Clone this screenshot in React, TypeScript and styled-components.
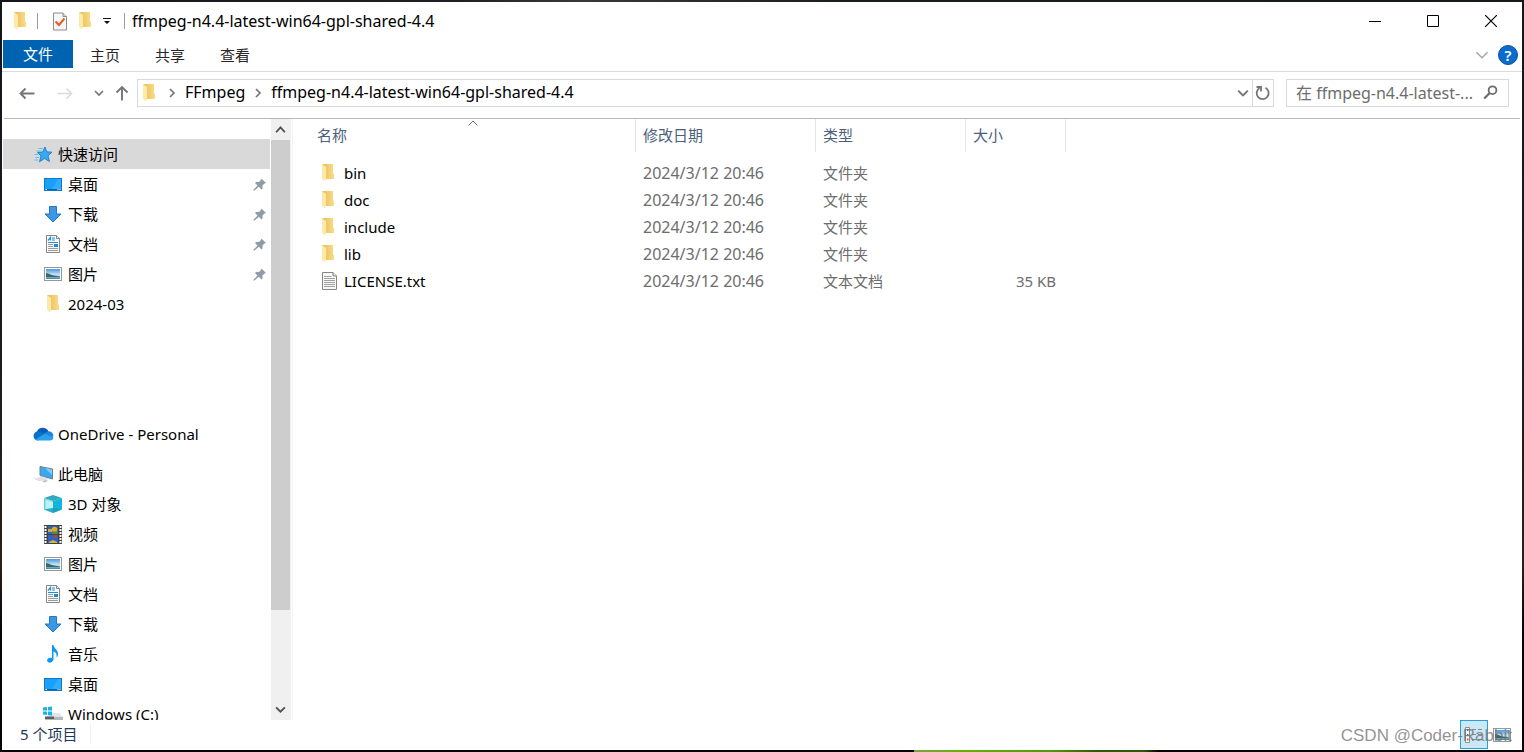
import React from "react";
import styled, { createGlobalStyle } from "styled-components";

const GlobalStyle = createGlobalStyle`
  *, *::before, *::after { box-sizing: border-box; }
  body {
    margin: 0;
    font-family: "Noto Sans", "Noto Sans CJK SC", sans-serif;
    font-size: 15px;
    line-height: 20px;
    color: #000;
  }
  button, input {
    font: inherit;
    color: inherit;
    border: 0;
    background: none;
    padding: 0;
    margin: 0;
  }
  a { color: inherit; text-decoration: none; }
  svg { display: block; flex: none; }
  ul { list-style: none; margin: 0; padding: 0; }
`;

/* ---------- window frame ---------- */

const Desktop = styled.div`
  height: 100vh;
  padding: 2px;
  background:
    linear-gradient(90deg, transparent 60%, #7ea04a 60%, #63b300 63%, #4f9a08 69%, #2c5a06 72%, #305c0a 75%, transparent 76%) bottom / 100% 2px no-repeat,
    linear-gradient(90deg, #17151a, #211f26 30%, #3a363f 38%, #1b1d24 55%, #15191f) top / 100% 2px no-repeat,
    linear-gradient(180deg, #14161c, #1a1c20 45%, #2b1f19 75%, #050506 84%, #050506);
`;

const Window = styled.main`
  height: 100%;
  display: flex;
  flex-direction: column;
  background: #fff;
`;

const TitleBar = styled.header`
  height: 38px;
  flex: none;
  display: flex;
  align-items: center;
`;

const QuickTools = styled.div`
  display: flex;
  align-items: center;
  padding-left: 12px;
`;

const ToolButton = styled.button<{ $gap?: number }>`
  display: flex;
  align-items: center;
  justify-content: center;
  margin-left: ${(p) => p.$gap ?? 0}px;
`;

const Divider = styled.span<{ $left: number }>`
  width: 1px;
  height: 16px;
  margin-left: ${(p) => p.$left}px;
  background: #9a9a9a;
`;

const Title = styled.h1`
  margin: 0;
  padding-left: 7px;
  flex: 1;
  font-size: 16px;
  font-weight: 400;
`;

const CaptionButton = styled.button`
  width: 58px;
  height: 38px;
  display: flex;
  align-items: center;
  justify-content: center;
`;

const CaptionButtons = styled.div`
  display: flex;
  padding-right: 2px;
`;

/* ---------- ribbon tabs ---------- */

const Ribbon = styled.nav`
  height: 32px;
  flex: none;
  display: flex;
  align-items: flex-start;
  padding: 0 4px 0 1px;
  border-bottom: 1px solid #dadbdc;
`;

const FileTab = styled.button`
  width: 70px;
  height: 28px;
  background: #0063b1;
  color: #fff;
`;

const Tab = styled.button`
  width: 65px;
  height: 30px;
  padding-right: 1px;
  color: #262626;
`;

const RibbonEnd = styled.div`
  margin-left: auto;
  height: 30px;
  display: flex;
  align-items: center;
  gap: 9px;
`;

const HelpButton = styled.button`
  width: 20px;
  height: 20px;
  border-radius: 50%;
  border: 1px solid #0b4f94;
  background: #0a6cce;
  color: #fff;
  font-size: 15px;
  font-weight: 600;
  line-height: 18px;
`;

/* ---------- address row ---------- */

const AddressRow = styled.div`
  height: 47px;
  flex: none;
  display: flex;
  align-items: center;
  margin: 0 2px;
  padding: 0 11px 5px 14px;
  border-bottom: 1px solid #b9b9b9;
  font-size: 16px;
`;

const NavButtons = styled.div`
  display: flex;
  gap: 4px;
  padding-right: 1px;
`;

const NavButton = styled.button<{ $width: number }>`
  width: ${(p) => p.$width}px;
  height: 28px;
  display: flex;
  align-items: center;
  justify-content: center;
`;

const AddressBox = styled.div`
  flex: 1;
  height: 28px;
  display: flex;
  align-items: center;
  border: 1px solid #d9d9d9;
  padding-left: 5px;
`;

const Crumb = styled.button`
  height: 26px;
  padding-bottom: 2px;
`;

const CrumbArrow = styled.span<{ $gap?: number }>`
  width: 26px;
  margin-left: ${(p) => p.$gap ?? 0}px;
  display: flex;
  justify-content: center;
`;

const HistoryButton = styled.button`
  width: 19px;
  height: 26px;
  margin-left: auto;
  display: flex;
  align-items: center;
  justify-content: center;
`;

const RefreshButton = styled.button`
  width: 21px;
  height: 26px;
  border-left: 1px solid #d9d9d9;
  display: flex;
  align-items: center;
  justify-content: center;
`;

const SearchBox = styled.label`
  width: 223px;
  height: 28px;
  margin-left: 12px;
  padding: 0 10px 0 9px;
  border: 1px solid #d9d9d9;
  display: flex;
  align-items: center;
`;

const SearchInput = styled.input`
  flex: 1;
  min-width: 0;
  height: 26px;
  outline: none;
  &::placeholder { color: #6d6d6d; opacity: 1; }
`;

/* ---------- body ---------- */

const Body = styled.div`
  flex: 1;
  min-height: 0;
  display: flex;
`;

const Sidebar = styled.nav`
  width: 291px;
  flex: none;
  display: flex;
  border-right: 1px solid #f4f4f4;
`;

const Tree = styled.div`
  flex: 1;
  overflow: hidden;
  padding: 20px 1px 0 1px;
`;

const Group = styled.ul<{ $after: number }>`
  margin-bottom: ${(p) => p.$after}px;
`;

const TreeLink = styled.a<{ $level: number; $selected?: boolean }>`
  height: 30px;
  display: flex;
  align-items: center;
  padding: 0 3px 0 ${(p) => (p.$level === 0 ? 29 : 39)}px;
  background: ${(p) => (p.$selected ? "#d9d9d9" : "transparent")};
`;

const TreeIcon = styled.span`
  width: 22px;
  margin-right: 4px;
  display: flex;
  justify-content: center;
`;

const TreeLabel = styled.span`
  flex: 1;
  white-space: nowrap;
`;

const ScrollBar = styled.div`
  width: 20px;
  margin-right: 1px;
  display: flex;
  flex-direction: column;
  background: #f0f0f0;
`;

const ScrollButton = styled.button`
  height: 21px;
  margin-right: 1px;
  flex: none;
  display: flex;
  align-items: center;
  justify-content: center;
`;

const ScrollTrack = styled.div`
  flex: 1;
`;

const ScrollThumb = styled.div`
  height: 84%;
  margin-right: 1px;
  background: #cdcdcd;
`;

/* ---------- file list ---------- */

const FileArea = styled.section`
  flex: 1;
  min-width: 0;
`;

const FileTable = styled.table`
  width: 100%;
  table-layout: fixed;
  border-collapse: collapse;
`;

const HeadCell = styled.th<{ $first?: boolean }>`
  height: 40px;
  padding: 0;
  vertical-align: top;
  text-align: left;
  font-weight: 400;
  color: #4c607a;
  position: relative;

  > span {
    display: flex;
    align-items: center;
    height: 33px;
    padding: 0 0 2px ${(p) => (p.$first ? 24 : 7)}px;
    border-right: 1px solid #e5e5e5;
  }
`;

const SortMark = styled.svg`
  position: absolute;
  top: 1px;
  left: 175px;
`;

const Cell = styled.td<{ $right?: boolean; $date?: boolean }>`
  height: 27px;
  padding: 0 10px 0 7px;
  color: #6d6d6d;
  font-size: ${(p) => (p.$date ? 16 : 15)}px;
  white-space: nowrap;
  text-align: ${(p) => (p.$right ? "right" : "left")};
`;

const NameCell = styled(Cell)`
  padding-left: 29px;
  color: #000;
`;

const FileLink = styled.a`
  display: flex;
  align-items: center;
`;

const FileIcon = styled.span`
  width: 22px;
  height: 20px;
  display: flex;
  align-items: center;
`;

/* ---------- status bar ---------- */

const StatusBar = styled.footer`
  height: 30px;
  flex: none;
  display: flex;
  align-items: flex-start;
  position: relative;
  padding: 0 11px 0 18px;
  color: #1e395b;
`;

const Count = styled.span`
  width: 71px;
  line-height: 20px;
  margin-top: 4px;
  border-right: 1px solid #f0f0f0;
`;

const ViewButtons = styled.div`
  margin-left: auto;
  display: flex;
`;

const ViewButton = styled.button<{ $active?: boolean }>`
  width: ${(p) => (p.$active ? 28 : 23)}px;
  height: 29px;
  display: flex;
  align-items: center;
  justify-content: ${(p) => (p.$active ? "center" : "flex-end")};
  border: ${(p) => (p.$active ? "1px solid #26a0da" : "0")};
  background: ${(p) => (p.$active ? "#cbe8f6" : "transparent")};
`;

const Watermark = styled.span`
  position: absolute;
  right: 10px;
  top: 6px;
  font-family: "Liberation Sans", sans-serif;
  font-size: 17px;
  color: rgba(110, 110, 110, 0.75);
  pointer-events: none;
`;

/* ---------- icons ---------- */

const Folder = () => (
  <svg width="12" height="18" viewBox="0 0 12 18">
    <defs>
      <linearGradient id="fold" x1="0" x2="1">
        <stop offset="0.200" stopColor="#e9c268" />
        <stop offset="1" stopColor="#fbdc82" />
      </linearGradient>
    </defs>
    <path d="M0 0H11V9.500L12 10V15H3Z" fill="url(#fold)" />
    <path d="M0 0L4 3V14.500L3 17.500L0 15Z" fill="#ffe9a6" />
  </svg>
);

const CheckDoc = () => (
  <svg width="16" height="19" viewBox="0 0 16 19">
    <path d="M1.500 1H11L14.500 4.500V18H1.500Z" fill="#f7f7f7" stroke="#8c8c8c" />
    <path d="M11 1V4.500H14.500" fill="#ddd" stroke="#8c8c8c" />
    <path d="M3.500 9.500L7 13L12.500 6.500" fill="none" stroke="#ee5a1c" strokeWidth="2" />
  </svg>
);

const ToolArrow = () => (
  <svg width="8" height="7" viewBox="0 0 8 7">
    <path d="M0 0H8V1H0ZM1 3H7L4 6Z" fill="#111" />
  </svg>
);

type ChevronProps = { d: "up" | "down" | "right"; size?: number; color?: string; w?: number };
const Chevron = ({ d, size = 10, color = "#757575", w = 1.7 }: ChevronProps) => {
  const paths = { up: "M1 7.500L5 3L9 7.500", down: "M1 3L5 7L9 3", right: "M3 1L7 5L3 9" };
  return (
    <svg width={size} height={size} viewBox="0 0 10 10">
      <path d={paths[d]} fill="none" stroke={color} strokeWidth={w} />
    </svg>
  );
};

const Arrow = ({ up }: { up?: boolean }) => (
  <svg width="16" height="16" viewBox="0 0 16 16">
    <path
      d={up ? "M8 15.500V2M2.500 7.500L8 2L13.500 7.500" : "M15.500 8.500H1.500M6.500 3.500L1.500 8.500L6.500 13.500"}
      fill="none"
      stroke="#767676"
      strokeWidth="1.900"
    />
  </svg>
);

const ForwardArrow = () => (
  <svg width="16" height="16" viewBox="0 0 16 16">
    <path d="M0.500 8.500H14.500M9.500 3.500L14.500 8.500L9.500 13.500" fill="none" stroke="#dadada" strokeWidth="1.700" />
  </svg>
);

const Refresh = () => (
  <svg width="16" height="16" viewBox="0 0 16 16">
    <path d="M10.500 2.800A6 6 0 1 1 4.500 3" fill="none" stroke="#757575" strokeWidth="1.800" />
    <path d="M1.500 2H6V6.500" fill="none" stroke="#757575" strokeWidth="1.800" />
  </svg>
);

const Magnifier = () => (
  <svg width="15" height="15" viewBox="0 0 15 15">
    <circle cx="9.500" cy="5.200" r="3.900" fill="none" stroke="#6b6b6b" strokeWidth="1.800" />
    <path d="M6.700 8L1.200 13.500" stroke="#6b6b6b" strokeWidth="2.200" />
  </svg>
);

const Star = () => (
  <svg width="19" height="17" viewBox="0 0 19 17">
    <path d="M11 1L12.700 5.800L18 6.200L14 9.800L15.500 15.500L10.500 12.500L5.500 15.800L7 10L3.500 6.500L8.700 6Z" fill="#38a9ee" stroke="#1580cc" strokeWidth="0.900" />
    <path d="M4.500 2.500H9M2.500 5H7.500M0.500 8.500H4M1.500 11.500H5M0.500 14H4" stroke="#5db8ee" strokeWidth="0.900" />
  </svg>
);

const DesktopIcon = () => (
  <svg width="18" height="13" viewBox="0 0 18 13">
    <rect x="0.500" y="0.500" width="17" height="12" fill="#18a0fb" stroke="#0b78c8" />
    <path d="M8 11L14 1H17V11Z" fill="#45b4ff" opacity="0.600" />
    <path d="M1 11.500H17" stroke="#0a62ad" />
    <path d="M1.500 11.500H3M13.500 11.500H14.500M15.500 11.500H16.500" stroke="#fff" />
  </svg>
);

const Download = () => (
  <svg width="18" height="17" viewBox="0 0 18 17">
    <path d="M5.500 0.500H12.500V8H17L9 16L1 8H5.500Z" fill="#3c97e6" stroke="#2378c2" />
  </svg>
);

const Documents = () => (
  <svg width="16" height="18" viewBox="0 0 16 18">
    <path d="M1.500 0.500H11.500L14.500 3.500V17.500H1.500Z" fill="#fafafa" stroke="#858585" />
    <path d="M11.500 0.500V3.500H14.500" fill="#e5e5e5" stroke="#858585" />
    <path d="M3 5.500L5.500 2.500V5.500M7 3H10M7 5H10M3 7.500H13" fill="none" stroke="#1d8fd6" strokeWidth="1.200" />
    <path d="M3 9.500H8M3 11.500H8M3 13.500H13M3 15.500H13" stroke="#9a9a9a" />
    <rect x="9" y="9" width="4" height="3" fill="#2b87c4" />
  </svg>
);

const Pictures = () => (
  <svg width="18" height="14" viewBox="0 0 18 14">
    <defs>
      <linearGradient id="sky" x1="0" x2="0" y1="0" y2="1">
        <stop offset="0" stopColor="#4b96dc" />
        <stop offset="0.600" stopColor="#cde7f6" />
        <stop offset="1" stopColor="#3f7fb0" />
      </linearGradient>
    </defs>
    <rect x="0.500" y="0.500" width="17" height="13" fill="#fff" stroke="#979797" />
    <rect x="2" y="2" width="14" height="10" fill="url(#sky)" />
    <path d="M2 6C5 6.500 7 8 10 8.500L16 9.500V10H2Z" fill="#376b5c" />
  </svg>
);

const Cloud = () => (
  <svg width="21" height="14" viewBox="0 0 21 14">
    <path d="M4 4.500C5 0 13.500 -1 15.500 4.500L10 9L3 12Z" fill="#0a5cb8" />
    <path d="M10 7L15 4.200A5 5 0 0 1 20.500 9L17 12Z" fill="#1a86dc" />
    <path d="M2 12.500C-1 9 1 4.500 5 4.200C8 4 10 6 12 7L5 13.500Q3 13.500 2 12.500Z" fill="#0b70cc" />
    <path d="M2.500 12.500L11.500 6.800L20.500 10.500Q20 13.500 17 13.500H5Q3.500 13.500 2.500 12.500Z" fill="#28a2ea" />
  </svg>
);

const Computer = () => (
  <svg width="21" height="17" viewBox="0 0 21 17">
    <path d="M7 0.500L19.500 3V13L7 9.500Z" fill="#3aa7ee" stroke="#6e7f8c" />
    <path d="M12 2L19 3.500V9Z" fill="#82cdf7" />
    <path d="M0.500 12.500L10 10.500L16 13L6 15Z" fill="#d4d8dc" />
    <path d="M9 15L13 14L15 15L11 16.500Z" fill="#b8bdc2" />
    <path d="M2.500 12.500L10.500 11.500M4.500 13.500L13 12.300" stroke="#f4f4f4" strokeWidth="0.600" />
  </svg>
);

const Cube = () => (
  <svg width="18" height="18" viewBox="0 0 18 18">
    <path d="M0 3L9 0L18 3L9 6Z" fill="#35a9bb" />
    <path d="M0 3L9 6V18L0 14.500Z" fill="#62d3e4" />
    <path d="M18 3L9 6V18L18 14.500Z" fill="#12b3dc" />
    <path d="M1.500 4.500L9 7V13L1.500 14Z" fill="#c0f1f7" />
    <path d="M9 13L18 14.500L9 18L0 14.500Z" fill="#1598b4" opacity="0.650" />
  </svg>
);

const Video = () => (
  <svg width="18" height="19" viewBox="0 0 18 19">
    <rect width="18" height="19" fill="#3f4347" />
    <rect x="4" y="1" width="10" height="8" fill="#2c62c4" />
    <rect x="4" y="10" width="10" height="8" fill="#2c62c4" />
    <circle cx="10.500" cy="4.500" r="2.800" fill="#e8a51c" />
    <path d="M4 4H8V7H4Z" fill="#d4aa48" />
    <path d="M8 6.500H14V9H8Z" fill="#48913c" />
    <path d="M10 10H13V13H10Z" fill="#d13b26" />
    <path d="M5 17L9 15L13 17V18H5Z" fill="#e0b22e" />
    <path d="M1.500 1V18M16.500 1V18" stroke="#fff" strokeWidth="2" strokeDasharray="2 1" />
  </svg>
);

const Music = () => (
  <svg width="14" height="18" viewBox="0 0 14 18">
    <path d="M6 0H7.500C8 3.500 12.500 5 12 10C11.500 11.500 11 12 10.500 12.500C11 9 10 7.500 7.500 6.500V14.500C7 17 4.500 18 3 17.500C0.500 17 0.500 14 3 13C4 12.500 5 12.500 6 13Z" fill="#0f97f5" />
  </svg>
);

const Drive = () => (
  <svg width="20" height="16" viewBox="0 0 20 16">
    <path d="M6 7H16L20 11H4Z" fill="#e2e4e6" />
    <path d="M2 11H20V15H2Z" fill="#b4b8bc" />
    <path d="M2 10.500H11V13H2Z" fill="#5b6065" />
    <path d="M0 1.500L4 1V4.500H0ZM5 1L9 0.500V4.500H5ZM0 5.500H4V9L0 8.500ZM5 5.500H9V9.500L5 9Z" fill="#18b2ea" />
  </svg>
);

const TextDoc = () => (
  <svg width="16" height="18" viewBox="0 0 16 18">
    <path d="M0.500 0.500H11L14.500 4V17.500H0.500Z" fill="#f8f8f8" stroke="#858585" />
    <path d="M11 0.500V4H14.500" fill="#e0e0e0" stroke="#858585" />
    <path d="M2 4.500H9.500M2 6.500H13M2 8.500H13M2 10.500H13M2 12.500H13M2 14.500H13" stroke="#a0a0a0" />
  </svg>
);

const Pin = () => (
  <svg width="14" height="13" viewBox="0 0 14 13">
    <path d="M8.500 0.500L13 5L11.500 5.500L9.500 7.500V10.500L8.500 11.500L5.800 8.800L1.500 12.500L0.500 12.500V11.800L4.500 7.500L2 5L3 4H6L8 2Z" fill="#8f9ba6" />
  </svg>
);

const DetailsIcon = () => (
  <svg width="18" height="16" viewBox="0 0 18 16">
    <path d="M0.500 0.500H4.500V15.500H0.500Z" fill="#fff" stroke="#8b8b8b" />
    <path d="M2 3H3.500M2 8H3.500" stroke="#3c76b0" strokeWidth="2" />
    <path d="M2 12.500H3.500" stroke="#d24a2c" strokeWidth="2" />
    <path d="M7 2.500H11M13 2.500H17M7 7.500H11M13 7.500H17M7 12.500H11M13 12.500H17" stroke="#7f8a92" />
  </svg>
);

/* ---------- data ---------- */

type Node = { label: string; icon: React.ReactNode; pinned?: boolean };

const quick: Node[] = [
  { label: "桌面", icon: <DesktopIcon />, pinned: true },
  { label: "下载", icon: <Download />, pinned: true },
  { label: "文档", icon: <Documents />, pinned: true },
  { label: "图片", icon: <Pictures />, pinned: true },
  { label: "2024-03", icon: <Folder /> },
];

const computer: Node[] = [
  { label: "3D 对象", icon: <Cube /> },
  { label: "视频", icon: <Video /> },
  { label: "图片", icon: <Pictures /> },
  { label: "文档", icon: <Documents /> },
  { label: "下载", icon: <Download /> },
  { label: "音乐", icon: <Music /> },
  { label: "桌面", icon: <DesktopIcon /> },
  { label: "Windows (C:)", icon: <Drive /> },
];

const files = [
  { name: "bin", type: "文件夹", size: "" },
  { name: "doc", type: "文件夹", size: "" },
  { name: "include", type: "文件夹", size: "" },
  { name: "lib", type: "文件夹", size: "" },
  { name: "LICENSE.txt", type: "文本文档", size: "35 KB" },
];

const folderName = "ffmpeg-n4.4-latest-win64-gpl-shared-4.4";

const TreeItem = ({ node, level, selected }: { node: Node; level: number; selected?: boolean }) => (
  <li>
    <TreeLink href="#" $level={level} $selected={selected}>
      <TreeIcon>{node.icon}</TreeIcon>
      <TreeLabel>{node.label}</TreeLabel>
      {node.pinned && <Pin />}
    </TreeLink>
  </li>
);

export default function App() {
  return (
    <>
      <GlobalStyle />
      <Desktop>
        <Window>
          <TitleBar>
            <QuickTools>
              <Folder />
              <Divider $left={11} />
              <ToolButton $gap={14} aria-label="属性"><CheckDoc /></ToolButton>
              <ToolButton $gap={11} aria-label="新建文件夹"><Folder /></ToolButton>
              <ToolButton $gap={12} aria-label="自定义快速访问工具栏"><ToolArrow /></ToolButton>
              <Divider $left={13} />
            </QuickTools>
            <Title>{folderName}</Title>
            <CaptionButtons>
              <CaptionButton aria-label="最小化">
                <svg width="12" height="12"><path d="M0 6.500H12" stroke="#000" /></svg>
              </CaptionButton>
              <CaptionButton aria-label="最大化">
                <svg width="12" height="12"><path d="M0.500 0.500H11.500V11.500H0.500Z" fill="none" stroke="#000" /></svg>
              </CaptionButton>
              <CaptionButton aria-label="关闭">
                <svg width="12" height="12"><path d="M0 0L12 12M12 0L0 12" stroke="#000" strokeWidth="1.200" /></svg>
              </CaptionButton>
            </CaptionButtons>
          </TitleBar>

          <Ribbon>
            <FileTab>文件</FileTab>
            <Tab>主页</Tab>
            <Tab>共享</Tab>
            <Tab>查看</Tab>
            <RibbonEnd>
              <button aria-label="展开功能区"><Chevron d="down" size={14} color="#a6a6a6" w={1} /></button>
              <HelpButton aria-label="帮助">?</HelpButton>
            </RibbonEnd>
          </Ribbon>

          <AddressRow>
            <NavButtons>
              <NavButton $width={18} aria-label="返回"><Arrow /></NavButton>
              <NavButton $width={50} aria-label="前进"><ForwardArrow /></NavButton>
              <NavButton $width={10} aria-label="最近浏览的位置"><Chevron d="down" /></NavButton>
              <NavButton $width={28} aria-label="向上"><Arrow up /></NavButton>
            </NavButtons>
            <AddressBox>
              <Folder />
              <CrumbArrow $gap={4}><Chevron d="right" /></CrumbArrow>
              <Crumb>FFmpeg</Crumb>
              <CrumbArrow><Chevron d="right" /></CrumbArrow>
              <Crumb>{folderName}</Crumb>
              <HistoryButton aria-label="历史记录"><Chevron d="down" size={12} /></HistoryButton>
              <RefreshButton aria-label="刷新"><Refresh /></RefreshButton>
            </AddressBox>
            <SearchBox>
              <SearchInput aria-label="搜索" placeholder="在 ffmpeg-n4.4-latest-..." />
              <Magnifier />
            </SearchBox>
          </AddressRow>

          <Body>
            <Sidebar>
              <Tree>
                <Group $after={100}>
                  <TreeItem level={0} selected node={{ label: "快速访问", icon: <Star /> }} />
                  {quick.map((n) => <TreeItem key={n.label} node={n} level={1} />)}
                </Group>
                <Group $after={10}>
                  <TreeItem level={0} node={{ label: "OneDrive - Personal", icon: <Cloud /> }} />
                </Group>
                <Group $after={0}>
                  <TreeItem level={0} node={{ label: "此电脑", icon: <Computer /> }} />
                  {computer.map((n) => <TreeItem key={n.label} node={n} level={1} />)}
                </Group>
              </Tree>
              <ScrollBar>
                <ScrollButton aria-label="向上滚动"><Chevron d="up" size={11} color="#505050" /></ScrollButton>
                <ScrollTrack><ScrollThumb /></ScrollTrack>
                <ScrollButton aria-label="向下滚动"><Chevron d="down" size={11} color="#505050" /></ScrollButton>
              </ScrollBar>
            </Sidebar>

            <FileArea>
              <FileTable>
                <colgroup>
                  <col style={{ width: 343 }} />
                  <col style={{ width: 180 }} />
                  <col style={{ width: 150 }} />
                  <col style={{ width: 100 }} />
                  <col />
                </colgroup>
                <thead>
                  <tr>
                    <HeadCell $first>
                      <span>名称</span>
                      <SortMark width="10" height="6" viewBox="0 0 10 6">
                        <path d="M0.500 5.500L5 1L9.500 5.500" fill="none" stroke="#6d6d6d" />
                      </SortMark>
                    </HeadCell>
                    <HeadCell><span>修改日期</span></HeadCell>
                    <HeadCell><span>类型</span></HeadCell>
                    <HeadCell><span>大小</span></HeadCell>
                    <td />
                  </tr>
                </thead>
                <tbody>
                  {files.map((f) => (
                    <tr key={f.name}>
                      <NameCell>
                        <FileLink href="#">
                          <FileIcon>{f.size ? <TextDoc /> : <Folder />}</FileIcon>
                          {f.name}
                        </FileLink>
                      </NameCell>
                      <Cell $date>2024/3/12 20:46</Cell>
                      <Cell>{f.type}</Cell>
                      <Cell $right>{f.size}</Cell>
                      <td />
                    </tr>
                  ))}
                </tbody>
              </FileTable>
            </FileArea>
          </Body>

          <StatusBar>
            <Count>5 个项目</Count>
            <ViewButtons>
              <ViewButton $active aria-label="详细信息"><DetailsIcon /></ViewButton>
              <ViewButton aria-label="大图标"><Pictures /></ViewButton>
            </ViewButtons>
            <Watermark>CSDN @Coder-Rabbit</Watermark>
          </StatusBar>
        </Window>
      </Desktop>
    </>
  );
}
